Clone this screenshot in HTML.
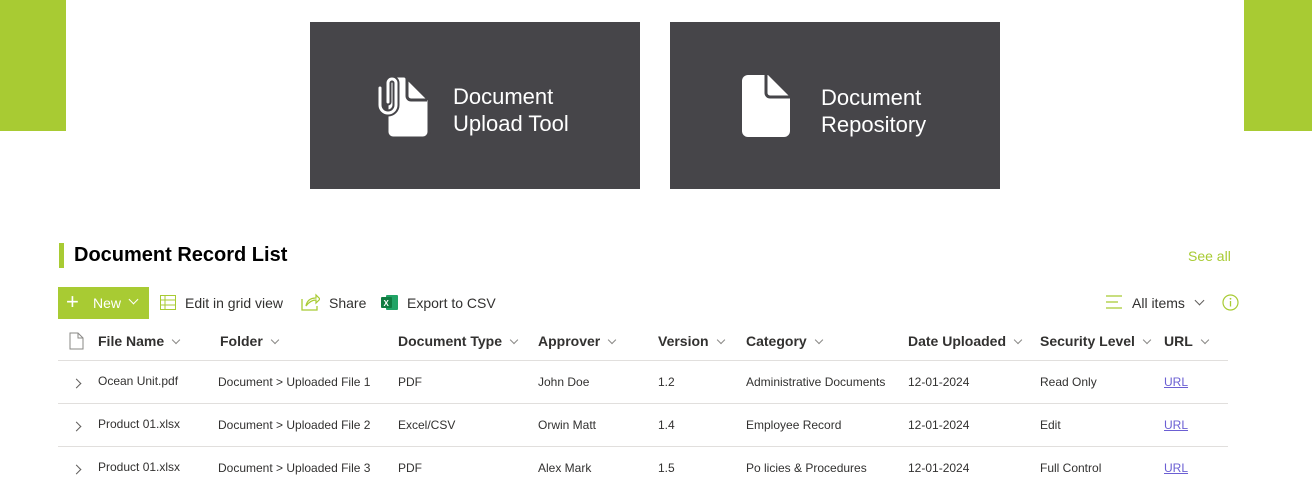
<!DOCTYPE html>
<html><head><meta charset="utf-8"><style>
*{margin:0;padding:0;box-sizing:border-box}
body{width:1312px;height:477px;background:#fff;position:relative;overflow:hidden;font-family:"Segoe UI","Liberation Sans",sans-serif;color:#323130}
.a{position:absolute;white-space:nowrap}
.bar{position:absolute;background:#a8cb33}
.tile{position:absolute;top:22px;width:330px;height:167px;background:#464549}
.tt{position:absolute;color:#fff;font-size:22px;line-height:27px}
.h{font-size:14px;font-weight:600;color:#323130;top:333px}
.r{font-size:12px;color:#323130}
.line{position:absolute;left:58px;width:1170px;height:1px;background:#e1dfdd}
.chev{display:inline-block;width:6px;height:6px;border-right:1px solid #8a8886;border-bottom:1px solid #8a8886;transform:rotate(45deg);margin-left:9px;position:relative;top:-3px}
.rc{position:absolute;width:7px;height:7px;border-right:1px solid #605e5c;border-top:1px solid #605e5c;transform:rotate(45deg)}
.u{color:#6b5fd3;text-decoration:underline}
.tb{font-size:14px;color:#323130;top:295px}
</style></head><body>
<div class="bar" style="left:0;top:0;width:66px;height:131px"></div>
<div class="bar" style="left:1244px;top:0;width:68px;height:131px"></div>

<div class="tile" style="left:310px">
<svg class="a" style="left:62px;top:52px" width="60" height="66" viewBox="0 0 60 66">
<path d="M15 2h18l24 24v32a6 6 0 0 1-6 6H21a6 6 0 0 1-6-6z" fill="#fff" stroke="#464549" stroke-width="3"/>
<path d="M35 4v18a4 4 0 0 0 4 4h16" fill="none" stroke="#464549" stroke-width="3"/>
<path d="M16 28V9a4 4 0 0 1 8 0v22a8 8 0 0 1-16 0V14" fill="none" stroke="#464549" stroke-width="7" stroke-linecap="round"/>
<path d="M16 28V9a4 4 0 0 1 8 0v22a8 8 0 0 1-16 0V14" fill="none" stroke="#fff" stroke-width="3" stroke-linecap="round"/>
</svg>
<div class="tt" style="left:143px;top:61px">Document<br>Upload Tool</div>
</div>
<div class="tile" style="left:670px">
<svg class="a" style="left:72px;top:53px" width="50" height="62" viewBox="0 0 50 62">
<path d="M6 0h20l22 22v34a6 6 0 0 1-6 6H6a6 6 0 0 1-6-6V6a6 6 0 0 1 6-6z" fill="#fff"/>
<path d="M24 0v18a4 4 0 0 0 4 4h20" fill="none" stroke="#464549" stroke-width="3"/>
</svg>
<div class="tt" style="left:151px;top:62px">Document<br>Repository</div>
</div>

<div class="bar" style="left:59px;top:243px;width:5px;height:25px"></div>
<div class="a" style="left:74px;top:244px;font-size:20px;font-weight:600;color:#000">Document Record List</div>
<div class="a" style="left:1188px;top:248px;font-size:14px;color:#a8cb33">See all</div>

<div class="bar" style="left:58px;top:287px;width:91px;height:32px"></div>
<div class="a" style="left:66px;top:291px;color:#fff;font-size:22px;line-height:22px;font-weight:300">+</div>
<div class="a" style="left:93px;top:295px;color:#fff;font-size:14px">New</div>
<div class="a" style="left:130px;top:296px;width:7px;height:7px;border-right:1px solid #fff;border-bottom:1px solid #fff;transform:rotate(45deg)"></div>
<svg class="a" style="left:160px;top:295px" width="16" height="15"><rect x="0.5" y="0.5" width="15" height="14" fill="none" stroke="#a8cb33"/><path d="M0 5h16M0 10h16M5 0v15" stroke="#a8cb33"/></svg>
<div class="a tb" style="left:185px">Edit in grid view</div>
<svg class="a" style="left:301px;top:293px" width="19" height="18"><path d="M1 6v11h15v-4" fill="none" stroke="#a8cb33" stroke-width="1.3"/><path d="M5 13c1-6 5-8 10-8V2l4 4-4 4V7c-4 0-7 2-10 6z" fill="none" stroke="#a8cb33" stroke-width="1.2"/></svg>
<div class="a tb" style="left:329px">Share</div>
<svg class="a" style="left:381px;top:294px" width="18" height="17"><rect x="5" y="1" width="12" height="15" rx="1" fill="#21a366"/><rect x="0" y="3" width="11" height="11" rx="1" fill="#107c41"/><text x="2.5" y="12" font-size="8" fill="#fff" font-family="Liberation Sans" font-weight="bold">X</text></svg>
<div class="a tb" style="left:407px">Export to CSV</div>

<svg class="a" style="left:1106px;top:295px" width="17" height="14"><path d="M0 1h16M0 7h12M0 13h16" stroke="#a8cb33" stroke-width="1.3"/></svg>
<div class="a tb" style="left:1132px">All items</div>
<div class="a" style="left:1196px;top:297px;width:7px;height:7px;border-right:1px solid #605e5c;border-bottom:1px solid #605e5c;transform:rotate(45deg)"></div>
<svg class="a" style="left:1222px;top:294px" width="17" height="17"><circle cx="8.5" cy="8.5" r="7.5" fill="none" stroke="#a8cb33" stroke-width="1.2"/><path d="M8.5 7v5.5" stroke="#a8cb33" stroke-width="1.3"/><circle cx="8.5" cy="4.8" r="0.9" fill="#a8cb33"/></svg>

<svg class="a" style="left:69px;top:332px" width="15" height="18"><path d="M1 1h8l5 5v11H1z M9 1v5h5" fill="none" stroke="#8a8886"/></svg>
<div class="a h" style="left:98px">File Name<span class="chev"></span></div>
<div class="a h" style="left:220px">Folder<span class="chev"></span></div>
<div class="a h" style="left:398px">Document Type<span class="chev"></span></div>
<div class="a h" style="left:538px">Approver<span class="chev"></span></div>
<div class="a h" style="left:658px">Version<span class="chev"></span></div>
<div class="a h" style="left:746px">Category<span class="chev"></span></div>
<div class="a h" style="left:908px">Date Uploaded<span class="chev"></span></div>
<div class="a h" style="left:1040px">Security Level<span class="chev"></span></div>
<div class="a h" style="left:1164px">URL<span class="chev"></span></div>
<div class="line" style="top:360px"></div>
<div class="line" style="top:403px"></div>
<div class="line" style="top:446px"></div>

<div class="rc" style="left:73px;top:380px"></div>
<div class="a r" style="left:98px;top:374px">Ocean Unit.pdf</div>
<div class="a r" style="left:218px;top:375px">Document &gt; Uploaded File 1</div>
<div class="a r" style="left:398px;top:375px">PDF</div>
<div class="a r" style="left:538px;top:375px">John Doe</div>
<div class="a r" style="left:658px;top:375px">1.2</div>
<div class="a r" style="left:746px;top:375px">Administrative Documents</div>
<div class="a r" style="left:908px;top:375px">12-01-2024</div>
<div class="a r" style="left:1040px;top:375px">Read Only</div>
<div class="a r u" style="left:1164px;top:375px">URL</div>

<div class="rc" style="left:73px;top:423px"></div>
<div class="a r" style="left:98px;top:417px">Product 01.xlsx</div>
<div class="a r" style="left:218px;top:418px">Document &gt; Uploaded File 2</div>
<div class="a r" style="left:398px;top:418px">Excel/CSV</div>
<div class="a r" style="left:538px;top:418px">Orwin Matt</div>
<div class="a r" style="left:658px;top:418px">1.4</div>
<div class="a r" style="left:746px;top:418px">Employee Record</div>
<div class="a r" style="left:908px;top:418px">12-01-2024</div>
<div class="a r" style="left:1040px;top:418px">Edit</div>
<div class="a r u" style="left:1164px;top:418px">URL</div>

<div class="rc" style="left:73px;top:466px"></div>
<div class="a r" style="left:98px;top:460px">Product 01.xlsx</div>
<div class="a r" style="left:218px;top:461px">Document &gt; Uploaded File 3</div>
<div class="a r" style="left:398px;top:461px">PDF</div>
<div class="a r" style="left:538px;top:461px">Alex Mark</div>
<div class="a r" style="left:658px;top:461px">1.5</div>
<div class="a r" style="left:746px;top:461px">Po licies &amp; Procedures</div>
<div class="a r" style="left:908px;top:461px">12-01-2024</div>
<div class="a r" style="left:1040px;top:461px">Full Control</div>
<div class="a r u" style="left:1164px;top:461px">URL</div>
</body></html>
